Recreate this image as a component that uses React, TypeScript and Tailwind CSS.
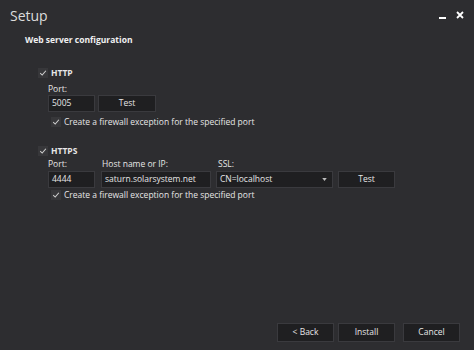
import React from "react";

const FONT = { fontFamily: '"Open Sans", "Noto Sans", sans-serif' };

function Check({ label, bold }: { label: string; bold?: boolean }) {
  return (
    <div className="flex h-[12px] items-center gap-[3px]">
      <span className="flex h-[10px] w-[10px] items-center justify-center bg-[#37373a]">
        <svg viewBox="0 0 10 10" className="h-[8px] w-[8px]">
          <path d="M1.5 5.2 L4 7.6 L8.6 2.2" fill="none" stroke="#d0d0d0" strokeWidth="1.3" />
        </svg>
      </span>
      <span className={`text-[8.5px] leading-[12px] text-[#e6e6e6] ${bold ? "font-bold" : ""}`}>{label}</span>
    </div>
  );
}

function Input({ value, w }: { value: string; w: string }) {
  return (
    <div className={`flex h-[17px] items-center border border-[#3a3a3e] bg-[#1f1f21] px-[3px] text-[8.5px] text-[#e6e6e6] ${w}`}>
      {value}
    </div>
  );
}

function Btn({ label, w }: { label: string; w: string }) {
  return (
    <div className={`flex items-center justify-center border border-[#3a3a3e] bg-[#1f1f21] text-[8.5px] text-[#e6e6e6] ${w}`}>
      {label}
    </div>
  );
}

export default function App() {
  return (
    <div className="flex h-[350px] w-[474px] flex-col bg-[#2d2d30] text-[#e6e6e6]" style={FONT}>
      <div className="flex h-[30px] items-center justify-between pl-[10px] pr-[10px]">
        <span className="text-[14px] text-[#dcdcdc]">Setup</span>
        <div className="flex items-center gap-[10px]">
          <span className="mt-[5px] h-[2px] w-[7px] bg-white" />
          <svg viewBox="0 0 8 8" className="h-[8px] w-[8px]">
            <path d="M1 1 L7 7 M7 1 L1 7" stroke="white" strokeWidth="1.8" />
          </svg>
        </div>
      </div>

      <div className="pl-[25px] pt-[4px] text-[8.5px] font-bold leading-[12px] text-[#f0f0f0]">Web server configuration</div>

      <div className="mt-[21px] flex flex-col pl-[38px]">
        <Check label="HTTP" bold />
        <div className="flex flex-col pl-[10px]">
          <span className="mt-[5px] text-[8.5px] leading-[10px]">Port:</span>
          <div className="mt-[1px] flex">
            <Input value="5005" w="w-[47px]" />
            <Btn label="Test" w="ml-[3px] h-[17px] w-[58px]" />
          </div>
          <div className="mt-[4px] pl-[3px]">
            <Check label="Create a firewall exception for the specified port" />
          </div>
        </div>

        <div className="mt-[17px]">
          <Check label="HTTPS" bold />
        </div>
        <div className="flex flex-col pl-[10px]">
          <div className="mt-[2px] flex text-[8.5px] leading-[10px]">
            <span className="w-[54px]">Port:</span>
            <span className="w-[116px]">Host name or IP:</span>
            <span>SSL:</span>
          </div>
          <div className="mt-[2px] flex">
            <Input value="4444" w="w-[47px]" />
            <Input value="saturn.solarsystem.net" w="ml-[6px] w-[110px]" />
            <div className="ml-[5px] flex h-[17px] w-[117px] items-center justify-between border border-[#3a3a3e] bg-[#1f1f21] px-[3px] text-[8.5px]">
              <span>CN=localhost</span>
              <svg viewBox="0 0 6 4" className="mr-[2px] h-[3px] w-[5px]">
                <path d="M0 0 L6 0 L3 4 Z" fill="#bdbdbd" />
              </svg>
            </div>
            <Btn label="Test" w="ml-[5px] h-[17px] w-[57px]" />
          </div>
          <div className="mt-[1px] pl-[3px]">
            <Check label="Create a firewall exception for the specified port" />
          </div>
        </div>
      </div>

      <div className="mt-auto mb-[8px] flex justify-end pr-[14px]">
        <Btn label="< Back" w="h-[19px] w-[57px]" />
        <Btn label="Install" w="ml-[4px] h-[19px] w-[57px]" />
        <Btn label="Cancel" w="ml-[8px] h-[19px] w-[57px]" />
      </div>
    </div>
  );
}
